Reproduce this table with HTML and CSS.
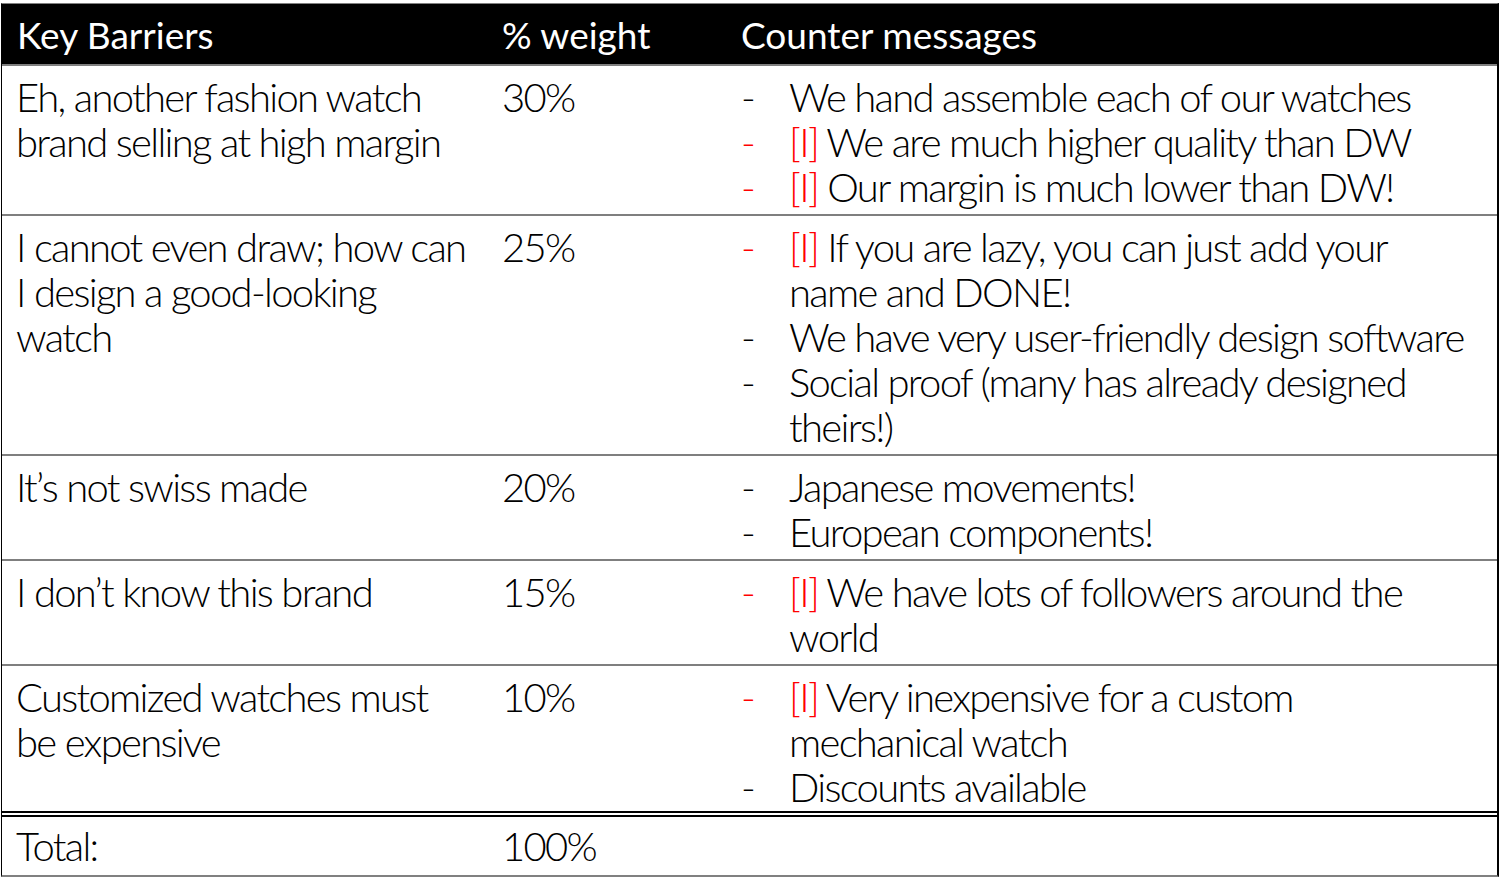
FILE: index.html
```html
<!DOCTYPE html>
<html>
<head>
<meta charset="utf-8">
<link rel="stylesheet" href="styles.css">
</head>
<body>
<div class="table">
  <div class="row head">
    <div class="c1">Key Barriers</div>
    <div class="c2">% weight</div>
    <div class="c3">Counter messages</div>
  </div>
  <div class="row">
    <div class="c1">Eh, another fashion watch<br>brand selling at high margin</div>
    <div class="c2">30%</div>
    <ul class="c3 list">
      <li><span class="dash">-</span><span class="txt">We hand assemble each of our watches</span></li>
      <li><span class="dash red">-</span><span class="txt"><span class="red">[I]</span> We are much higher quality than DW</span></li>
      <li><span class="dash red">-</span><span class="txt"><span class="red">[I]</span> Our margin is much lower than DW!</span></li>
    </ul>
  </div>
  <div class="row">
    <div class="c1">I cannot even draw; how can<br>I design a good-looking<br>watch</div>
    <div class="c2">25%</div>
    <ul class="c3 list">
      <li><span class="dash red">-</span><span class="txt"><span class="red">[I]</span> If you are lazy, you can just add your<br>name and DONE!</span></li>
      <li><span class="dash">-</span><span class="txt">We have very user-friendly design software</span></li>
      <li><span class="dash">-</span><span class="txt">Social proof (many has already designed<br>theirs!)</span></li>
    </ul>
  </div>
  <div class="row">
    <div class="c1">It’s not swiss made</div>
    <div class="c2">20%</div>
    <ul class="c3 list">
      <li><span class="dash">-</span><span class="txt">Japanese movements!</span></li>
      <li><span class="dash">-</span><span class="txt">European components!</span></li>
    </ul>
  </div>
  <div class="row">
    <div class="c1">I don’t know this brand</div>
    <div class="c2">15%</div>
    <ul class="c3 list">
      <li><span class="dash red">-</span><span class="txt"><span class="red">[I]</span> We have lots of followers around the<br>world</span></li>
    </ul>
  </div>
  <div class="row last">
    <div class="c1">Customized watches must<br>be expensive</div>
    <div class="c2">10%</div>
    <ul class="c3 list">
      <li><span class="dash red">-</span><span class="txt"><span class="red">[I]</span> Very inexpensive for a custom<br>mechanical watch</span></li>
      <li><span class="dash">-</span><span class="txt">Discounts available</span></li>
    </ul>
  </div>
  <div class="row total">
    <div class="c1">Total:</div>
    <div class="c2">100%</div>
    <div class="c3"></div>
  </div>
</div>
</body>
</html>
```

FILE: styles.css
```css
html, body {
  margin: 0;
  padding: 0;
  background: #ffffff;
}

body {
  font-family: "Lato Light", Lato, "Open Sans", sans-serif;
  font-weight: 300;
  font-size: 40px;
  line-height: 45px;
  letter-spacing: -1.7px;
  color: #000000;
}

.table {
  box-sizing: border-box;
  width: 1498px;
  margin: 3px 0 0 1px;
  border-top: 1px solid #808080;
  border-bottom: 2px solid #808080;
  border-left: 1px solid #000000;
  border-right: 2px solid #000000;
}

.row {
  display: grid;
  grid-template-columns: 485px 240px 1fr;
  padding: 9px 0 4px 0;
  border-bottom: 2px solid #7f7f7f;
  white-space: nowrap;
}

.row > div, .row > ul {
  padding-left: 14px;
  margin: 0;
}

.row .c2 { padding-left: 15px; }
.row .c3 { padding-left: 14px; }

.head {
  background: #000000;
  color: #ffffff;
  font-family: Lato, "Open Sans", sans-serif;
  font-weight: 400;
  font-size: 37px;
  letter-spacing: 0;
  padding: 8px 0 7px 0;
}

.head .c1 { padding-left: 15px; }

.list {
  list-style: none;
  padding-right: 0;
}

.list li {
  display: flex;
}

.dash {
  flex: 0 0 48px;
}

.red {
  color: #ff0000;
}

.last {
  padding-bottom: 1px;
  border-bottom: 6px double #000000;
}

.total {
  padding: 7px 0 6px 0;
  border-bottom: none;
}
```
